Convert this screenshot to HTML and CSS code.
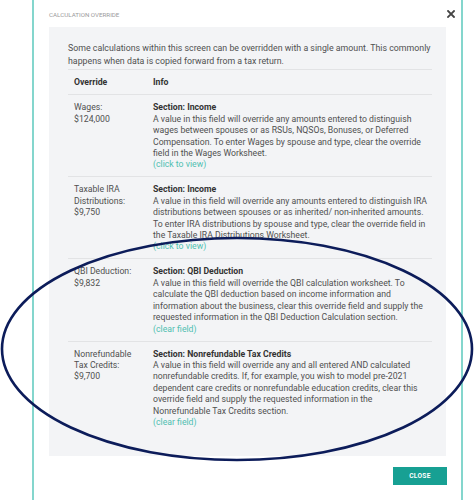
FILE: index.html
```html
<!DOCTYPE html>
<html>
<head>
<meta charset="utf-8">
<link rel="stylesheet" href="styles.css">
</head>
<body>
<div class="modal">
  <div class="modal-head">
    <span class="title">CALCULATION OVERRIDE</span>
    <svg class="close-x" width="8" height="8" viewBox="0 0 8 8"><path d="M1 1L7 7M7 1L1 7" stroke="#444" stroke-width="1.8" stroke-linecap="square"/></svg>
  </div>
  <div class="panel">
    <p class="intro">Some calculations within this screen can be overridden with a single amount. This commonly happens when data is copied forward from a tax return.</p>
    <div class="table">
      <div class="row head">
        <div class="cell-l">Override</div>
        <div class="cell-r">Info</div>
      </div>
      <div class="row">
        <div class="cell-l">Wages:<br>$124,000</div>
        <div class="cell-r"><b>Section: Income</b><br>A value in this field will override any amounts entered to distinguish wages between spouses or as RSUs, NQSOs, Bonuses, or Deferred Compensation. To enter Wages by spouse and type, clear the override field in the Wages Worksheet.<br><a class="link">(click to view)</a></div>
      </div>
      <div class="row">
        <div class="cell-l">Taxable IRA<br>Distributions:<br>$9,750</div>
        <div class="cell-r"><b>Section: Income</b><br>A value in this field will override any amounts entered to distinguish IRA distributions between spouses or as inherited/ non-inherited amounts. To enter IRA distributions by spouse and type, clear the override field in the Taxable IRA Distributions Worksheet.<br><a class="link">(click to view)</a></div>
      </div>
      <div class="row">
        <div class="cell-l">QBI Deduction:<br>$9,832</div>
        <div class="cell-r"><b>Section: QBI Deduction</b><br>A value in this field will override the QBI calculation worksheet. To calculate the QBI deduction based on income information and information about the business, clear this override field and supply the requested information in the QBI Deduction Calculation section.<br><a class="link">(clear field)</a></div>
      </div>
      <div class="row">
        <div class="cell-l">Nonrefundable<br>Tax Credits:<br>$9,700</div>
        <div class="cell-r"><b>Section: Nonrefundable Tax Credits</b><br>A value in this field will override any and all entered AND calculated nonrefundable credits. If, for example, you wish to model pre-2021 dependent care credits or nonrefundable education credits, clear this override field and supply the requested information in the Nonrefundable Tax Credits section.<br><a class="link">(clear field)</a></div>
      </div>
    </div>
  </div>
  <div class="actions">
    <button class="btn">CLOSE</button>
  </div>
</div>
<svg class="annotation" width="474" height="500" viewBox="0 0 474 500"><ellipse cx="237" cy="349" rx="235" ry="111" fill="none" stroke="#0c1c5a" stroke-width="2.6"/></svg>
</body>
</html>
```

FILE: styles.css
```css
html, body {
  margin: 0;
  padding: 0;
  background: #ffffff;
  overflow: hidden;
}
body {
  width: 474px;
  height: 500px;
  position: relative;
  font-family: Roboto, "Liberation Sans", sans-serif;
  color: #505050;
}
.modal {
  margin-left: 32px;
  width: 431px;
  height: 520px;
  border-left: 2px solid #84d6cd;
  border-right: 2px solid #84d6cd;
  padding: 0 15px;
  box-sizing: border-box;
}
.modal-head {
  height: 27px;
  display: flex;
  align-items: center;
  justify-content: space-between;
  padding-top: 2px;
  box-sizing: border-box;
}
.title {
  font-size: 6.2px;
  color: #9a9a9a;
}
.close-x {
  margin-right: -9px;
  margin-top: -2px;
}
.panel {
  background: #f3f4f6;
  padding: 15px 14px 22px 19px;
}
.intro {
  margin: 0 0 2px;
  font-size: 8.8px;
  line-height: 12.7px;
  color: #505050;
}
.row {
  display: grid;
  grid-template-columns: 85px 1fr;
  border-top: 1px solid #e2e3e5;
  padding: 7px 0 5.6px;
  font-size: 8.7px;
  line-height: 11.4px;
}
.row.head {
  height: 25px;
  box-sizing: border-box;
  padding: 0;
  align-items: center;
  font-weight: bold;
  color: #333;
}
.cell-l {
  padding-left: 6px;
}
.cell-r {
  padding-right: 5px;
}
.cell-r b {
  color: #333;
}
.link {
  color: #4fbfb1;
}
.actions {
  display: flex;
  justify-content: flex-end;
  padding-top: 11px;
  margin-right: -1px;
}
.btn {
  width: 54px;
  height: 18px;
  border: none;
  background: #17a093;
  color: #fff;
  font-family: Roboto, sans-serif;
  font-weight: bold;
  font-size: 6.6px;
  letter-spacing: 0.3px;
  padding: 0;
}
.annotation {
  position: absolute;
  left: 0;
  top: 0;
  pointer-events: none;
}
```
